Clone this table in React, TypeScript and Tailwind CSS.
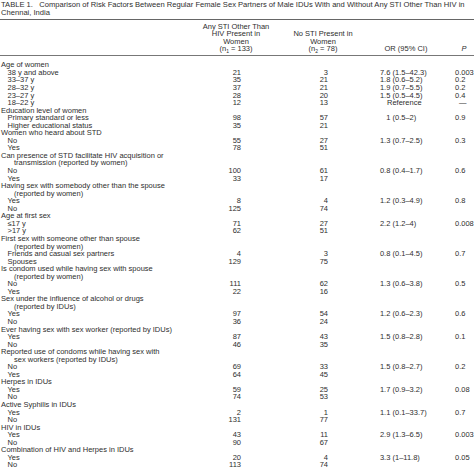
import React from "react";

type Row = [number, string, string?, string?, string?, string?, string?];

const rows: Row[] = [
  [0, "Age of women"],
  [1, "38 y and above", "21", "3", "7.6", "(1.5–42.3)", "0.003"],
  [1, "33–37 y", "35", "21", "1.8", "(0.6–5.2)", "0.2"],
  [1, "28–32 y", "37", "21", "1.9", "(0.7–5.5)", "0.2"],
  [1, "23–27 y", "28", "20", "1.5", "(0.5–4.5)", "0.4"],
  [1, "18–22 y", "12", "13", "REF", "", "—"],
  [0, "Education level of women"],
  [1, "Primary standard or less", "98", "57", "1", "(0.5–2)", "0.9"],
  [1, "Higher educational status", "35", "21"],
  [0, "Women who heard about STD"],
  [1, "No", "55", "27", "1.3", "(0.7–2.5)", "0.3"],
  [1, "Yes", "78", "51"],
  [0, "Can presence of STD facilitate HIV acquisition or"],
  [2, "transmission (reported by women)"],
  [1, "No", "100", "61", "0.8", "(0.4–1.7)", "0.6"],
  [1, "Yes", "33", "17"],
  [0, "Having sex with somebody other than the spouse"],
  [2, "(reported by women)"],
  [1, "Yes", "8", "4", "1.2", "(0.3–4.9)", "0.8"],
  [1, "No", "125", "74"],
  [0, "Age at first sex"],
  [1, "≤17 y", "71", "27", "2.2", "(1.2–4)", "0.008"],
  [1, ">17 y", "62", "51"],
  [0, "First sex with someone other than spouse"],
  [2, "(reported by women)"],
  [1, "Friends and casual sex partners", "4", "3", "0.8", "(0.1–4.5)", "0.7"],
  [1, "Spouses", "129", "75"],
  [0, "Is condom used while having sex with spouse"],
  [2, "(reported by women)"],
  [1, "No", "111", "62", "1.3", "(0.6–3.8)", "0.5"],
  [1, "Yes", "22", "16"],
  [0, "Sex under the influence of alcohol or drugs"],
  [2, "(reported by IDUs)"],
  [1, "Yes", "97", "54", "1.2", "(0.6–2.3)", "0.6"],
  [1, "No", "36", "24"],
  [0, "Ever having sex with sex worker (reported by IDUs)"],
  [1, "Yes", "87", "43", "1.5", "(0.8–2.8)", "0.1"],
  [1, "No", "46", "35"],
  [0, "Reported use of condoms while having sex with"],
  [2, "sex workers (reported by IDUs)"],
  [1, "No", "69", "33", "1.5", "(0.8–2.7)", "0.2"],
  [1, "Yes", "64", "45"],
  [0, "Herpes in IDUs"],
  [1, "Yes", "59", "25", "1.7", "(0.9–3.2)", "0.08"],
  [1, "No", "74", "53"],
  [0, "Active Syphilis in IDUs"],
  [1, "Yes", "2", "1", "1.1", "(0.1–33.7)", "0.7"],
  [1, "No", "131", "77"],
  [0, "HIV in IDUs"],
  [1, "Yes", "43", "11", "2.9", "(1.3–6.5)", "0.003"],
  [1, "No", "90", "67"],
  [0, "Combination of HIV and Herpes in IDUs"],
  [1, "Yes", "20", "4", "3.3", "(1–11.8)", "0.05"],
  [1, "No", "113", "74"],
];

const indent = ["pl-[1px]", "pl-[7.5px]", "pl-[14px]"];

export default function App() {
  return (
    <div
      className="w-[474px] h-[472px] overflow-hidden bg-white text-[#2e2e2e] whitespace-nowrap"
      style={{ fontFamily: '"Liberation Sans", Arial, sans-serif' }}
    >
      <div className="pt-[1px] pl-[1px] text-[7.6px] leading-[8px]">
        TABLE 1.&nbsp;&nbsp; Comparison of Risk Factors Between Regular Female Sex Partners of Male IDUs With and Without Any STI Other Than HIV in
        <br />
        Chennai, India
      </div>
      <div className="w-[490px] mt-[1.5px] border-t-[1.5px] border-[#666]">
        <div className="flex items-end pt-[3px] pb-[2.5px] text-[7.5px] leading-[7.6px] border-b border-[#777]">
          <div className="w-[196px]" />
          <div className="w-[80px] flex flex-col items-center">
            <span>Any STI Other Than</span>
            <span>HIV Present in</span>
            <span>Women</span>
            <span>
              (n<sub className="text-[5px]">1</sub> = 133)
            </span>
          </div>
          <div className="w-[94px] flex flex-col items-center">
            <span>No STI Present in</span>
            <span>Women</span>
            <span>
              (n<sub className="text-[5px]">2</sub> = 78)
            </span>
          </div>
          <div className="w-[72px] text-center">OR (95% CI)</div>
          <div className="w-[44px] text-center italic">P</div>
        </div>
        <div className="pt-[5px] text-[7.5px]">
          {rows.map((r, i) => (
            <div key={i} className="flex h-[7.55px] leading-[7.55px]">
              <div className={`w-[200px] ${indent[r[0]]}`}>{r[1]}</div>
              <div className="w-[41px] text-right">{r[2] ?? ""}</div>
              <div className="w-[87px] text-right">{r[3] ?? ""}</div>
              {r[4] === "REF" ? (
                <div className="w-[127px] pl-[59px]">Reference</div>
              ) : (
                <>
                  <div className="w-[62.4px] text-right">{r[4] ?? ""}</div>
                  <div className="w-[64.6px] whitespace-pre">{r[5] ? " " + r[5] : ""}</div>
                </>
              )}
              <div className={r[6] === "—" ? "pl-[4px]" : ""}>{r[6] ?? ""}</div>
            </div>
          ))}
        </div>
      </div>
    </div>
  );
}
